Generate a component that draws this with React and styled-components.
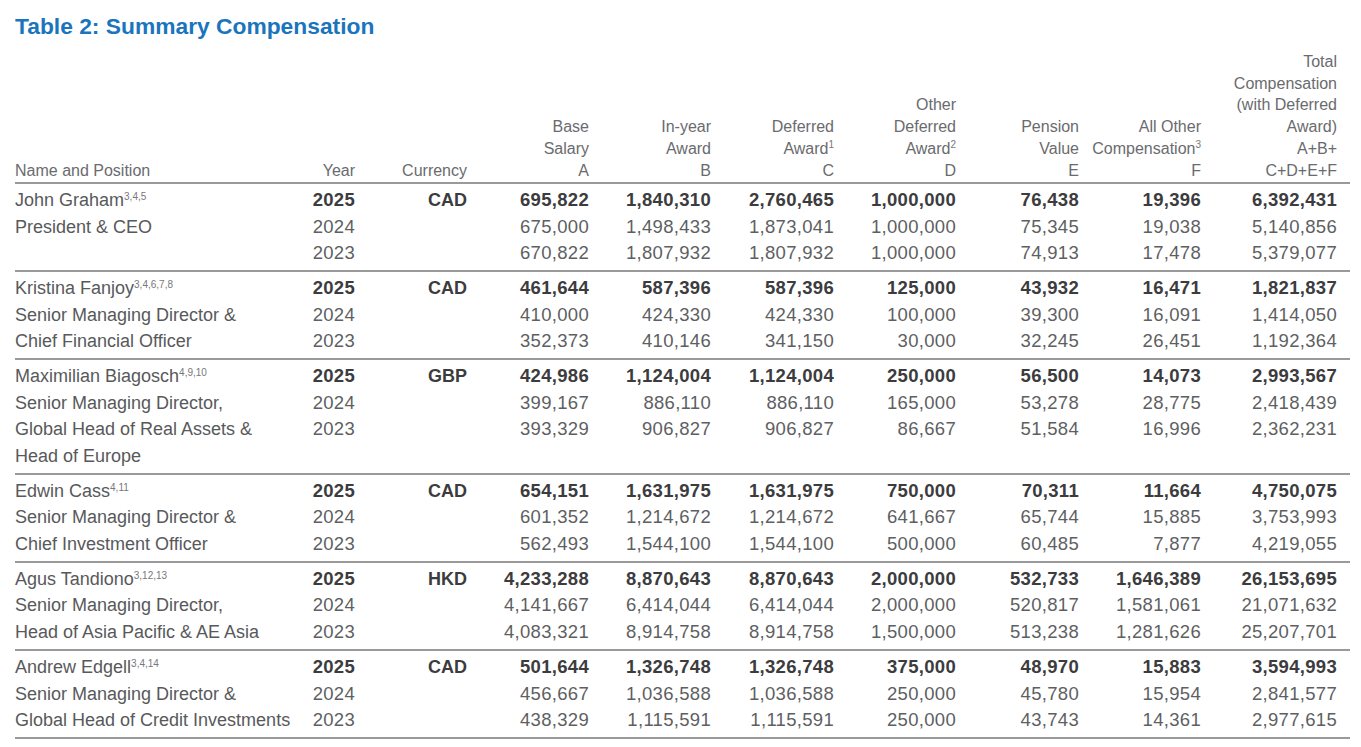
import React from "react";
import styled, { createGlobalStyle } from "styled-components";

const GlobalStyle = createGlobalStyle`
  body {
    margin: 0;
    background: #fff;
    font-family: "Liberation Sans", Arial, Helvetica, sans-serif;
    -webkit-font-smoothing: antialiased;
  }
`;

const COLUMNS = "55px 112px 122px 122px 123px 122px 123px 122px 136px";

const Page = styled.div`
  padding: 13px 11px 0 15px;
  width: 1335px;
`;

const Title = styled.h1`
  margin: 0;
  font-size: 22.8px;
  line-height: 27px;
  font-weight: 700;
  color: #1a75bc;
`;

const HeaderRow = styled.div`
  display: flex;
  align-items: flex-end;
  margin-top: 11px;
  padding: 0 13px 1px 0;
  border-bottom: 2px solid #9a9a9a;
`;

const HeaderFigures = styled.div`
  display: grid;
  grid-template-columns: ${COLUMNS};
  align-items: end;
`;

const HeadCell = styled.div`
  font-size: 16px;
  line-height: 21.7px;
  color: #6a6b6e;
  text-align: ${({ $left }) => ($left ? "left" : "right")};
  white-space: nowrap;
`;

const NameHead = styled(HeadCell)`
  width: 285px;
`;

const Sup = styled.sup`
  font-size: 10px;
  line-height: 0;
  vertical-align: 6px;
  color: #77787b;
`;

const Group = styled.div`
  display: flex;
  padding: 3px 13px 3.9px 0;
  border-bottom: 2px solid #9a9a9a;
`;

const NameCell = styled.div`
  width: 285px;
  flex: none;
`;

const NameLine = styled.div`
  font-size: 18px;
  line-height: 26.4px;
  color: #58595b;
  white-space: nowrap;
`;

const Figures = styled.div`
  display: grid;
  grid-template-columns: ${COLUMNS};
  grid-auto-rows: 26.4px;
  align-content: start;
`;

const Cell = styled.div`
  font-size: ${({ $num }) => ($num ? "18.5px" : "18px")};
  letter-spacing: ${({ $num }) => ($num ? "0.3px" : "0")};
  line-height: 26.4px;
  text-align: right;
  white-space: nowrap;
  font-weight: ${({ $bold }) => ($bold ? 700 : 400)};
  color: ${({ $bold }) => ($bold ? "#3c3c3e" : "#5e5f62")};
`;

const headers = [
  { lines: ["Year"] },
  { lines: ["Currency"] },
  { lines: ["Base", "Salary", "A"] },
  { lines: ["In-year", "Award", "B"] },
  { lines: ["Deferred", ["Award", "1"], "C"] },
  { lines: ["Other", "Deferred", ["Award", "2"], "D"] },
  { lines: ["Pension", "Value", "E"] },
  { lines: ["All Other", ["Compensation", "3"], "F"] },
  { lines: ["Total", "Compensation", "(with Deferred", "Award)", "A+B+", "C+D+E+F"] },
];

const people = [
  {
    name: "John Graham",
    notes: "3,4,5",
    title: ["President & CEO"],
    currency: "CAD",
    rows: [
      ["695,822", "1,840,310", "2,760,465", "1,000,000", "76,438", "19,396", "6,392,431"],
      ["675,000", "1,498,433", "1,873,041", "1,000,000", "75,345", "19,038", "5,140,856"],
      ["670,822", "1,807,932", "1,807,932", "1,000,000", "74,913", "17,478", "5,379,077"],
    ],
  },
  {
    name: "Kristina Fanjoy",
    notes: "3,4,6,7,8",
    title: ["Senior Managing Director &", "Chief Financial Officer"],
    currency: "CAD",
    rows: [
      ["461,644", "587,396", "587,396", "125,000", "43,932", "16,471", "1,821,837"],
      ["410,000", "424,330", "424,330", "100,000", "39,300", "16,091", "1,414,050"],
      ["352,373", "410,146", "341,150", "30,000", "32,245", "26,451", "1,192,364"],
    ],
  },
  {
    name: "Maximilian Biagosch",
    notes: "4,9,10",
    title: ["Senior Managing Director,", "Global Head of Real Assets &", "Head of Europe"],
    currency: "GBP",
    rows: [
      ["424,986", "1,124,004", "1,124,004", "250,000", "56,500", "14,073", "2,993,567"],
      ["399,167", "886,110", "886,110", "165,000", "53,278", "28,775", "2,418,439"],
      ["393,329", "906,827", "906,827", "86,667", "51,584", "16,996", "2,362,231"],
    ],
  },
  {
    name: "Edwin Cass",
    notes: "4,11",
    title: ["Senior Managing Director &", "Chief Investment Officer"],
    currency: "CAD",
    rows: [
      ["654,151", "1,631,975", "1,631,975", "750,000", "70,311", "11,664", "4,750,075"],
      ["601,352", "1,214,672", "1,214,672", "641,667", "65,744", "15,885", "3,753,993"],
      ["562,493", "1,544,100", "1,544,100", "500,000", "60,485", "7,877", "4,219,055"],
    ],
  },
  {
    name: "Agus Tandiono",
    notes: "3,12,13",
    title: ["Senior Managing Director,", "Head of Asia Pacific & AE Asia"],
    currency: "HKD",
    rows: [
      ["4,233,288", "8,870,643", "8,870,643", "2,000,000", "532,733", "1,646,389", "26,153,695"],
      ["4,141,667", "6,414,044", "6,414,044", "2,000,000", "520,817", "1,581,061", "21,071,632"],
      ["4,083,321", "8,914,758", "8,914,758", "1,500,000", "513,238", "1,281,626", "25,207,701"],
    ],
  },
  {
    name: "Andrew Edgell",
    notes: "3,4,14",
    title: ["Senior Managing Director &", "Global Head of Credit Investments"],
    currency: "CAD",
    rows: [
      ["501,644", "1,326,748", "1,326,748", "375,000", "48,970", "15,883", "3,594,993"],
      ["456,667", "1,036,588", "1,036,588", "250,000", "45,780", "15,954", "2,841,577"],
      ["438,329", "1,115,591", "1,115,591", "250,000", "43,743", "14,361", "2,977,615"],
    ],
  },
];

const years = ["2025", "2024", "2023"];

const HeadLines = ({ lines }) =>
  lines.map((line, i) => (
    <div key={i}>
      {Array.isArray(line) ? (
        <>
          {line[0]}
          <Sup>{line[1]}</Sup>
        </>
      ) : (
        line
      )}
    </div>
  ));

const PersonGroup = ({ person }) => (
  <Group>
    <NameCell>
      <NameLine>
        {person.name}
        <Sup>{person.notes}</Sup>
      </NameLine>
      {person.title.map((t) => (
        <NameLine key={t}>{t}</NameLine>
      ))}
    </NameCell>
    <Figures>
      {person.rows.map((row, i) => (
        <React.Fragment key={years[i]}>
          <Cell $num $bold={i === 0}>{years[i]}</Cell>
          <Cell $bold>{i === 0 ? person.currency : ""}</Cell>
          {row.map((v, j) => (
            <Cell key={j} $num $bold={i === 0}>
              {v}
            </Cell>
          ))}
        </React.Fragment>
      ))}
    </Figures>
  </Group>
);

export default function App() {
  return (
    <>
      <GlobalStyle />
      <Page>
        <Title>Table 2: Summary Compensation</Title>
        <HeaderRow>
          <NameHead $left>Name and Position</NameHead>
          <HeaderFigures>
            {headers.map((h, i) => (
              <HeadCell key={i}>
                <HeadLines lines={h.lines} />
              </HeadCell>
            ))}
          </HeaderFigures>
        </HeaderRow>
        {people.map((p) => (
          <PersonGroup key={p.name} person={p} />
        ))}
      </Page>
    </>
  );
}
